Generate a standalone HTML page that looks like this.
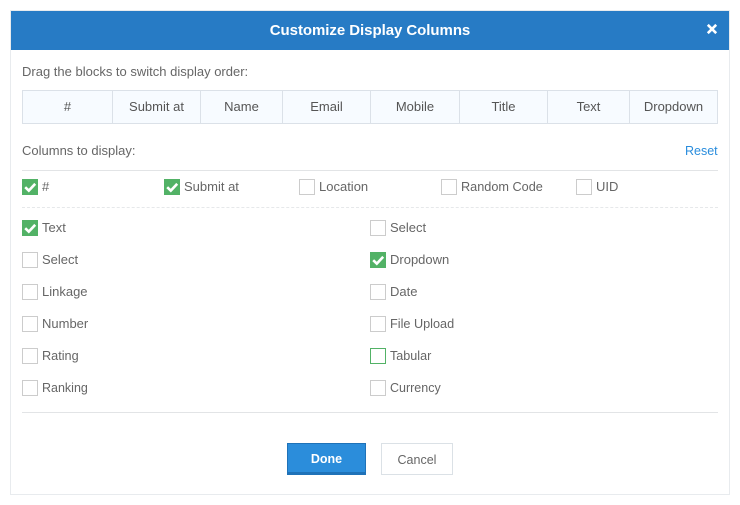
<!DOCTYPE html>
<html>
<head>
<meta charset="utf-8">
<style>
html,body{margin:0;padding:0;background:#fff;}
body{width:740px;height:505px;position:relative;overflow:hidden;font-family:"Liberation Sans",Arial,sans-serif;font-size:13px;color:#666;}
.a{position:absolute;white-space:nowrap;line-height:16px;}
.dialog{position:absolute;left:10px;top:10px;width:718px;height:483px;border:1px solid #e8ebee;}
.head{position:absolute;left:11px;top:11px;width:718px;height:39px;background:#277bc5;color:#fff;font-weight:bold;font-size:15px;letter-spacing:-0.05px;line-height:39px;text-align:center;}
.tbl{position:absolute;left:22px;top:90px;width:694px;height:32px;border:1px solid #dbe1e8;background:#f7fbff;}
.cell{position:absolute;top:0;height:32px;line-height:32px;text-align:center;color:#555;box-sizing:border-box;border-right:1px solid #dbe1e8;}
.cb{position:absolute;width:14px;height:14px;border:1px solid #ccc;background:#fff;}
.cb.on{width:16px;height:16px;border:0;background:#52b266;}
.cb.on svg{position:absolute;left:0;top:0;}
.cb.g{border-color:#52b266;}
.hr{position:absolute;left:22px;width:696px;height:1px;background:#e2e4e6;}
.dash{position:absolute;left:22px;width:696px;height:0;border-top:1px dashed #e6e8ea;}
.btn{position:absolute;box-sizing:border-box;text-align:center;}
</style>
</head>
<body>
<div class="dialog"></div>
<div class="head">Customize Display Columns</div>
<svg class="a" style="left:706px;top:23px" width="12" height="12" viewBox="0 0 12 12"><path d="M1.8 1.8L10.2 10.2M10.2 1.8L1.8 10.2" stroke="#fff" stroke-width="2.6" fill="none"/></svg>

<div class="a" style="left:22px;top:64px">Drag the blocks to switch display order:</div>

<div class="tbl">
<div class="cell" style="left:0;width:90px">#</div>
<div class="cell" style="left:90px;width:88px">Submit at</div>
<div class="cell" style="left:178px;width:82px">Name</div>
<div class="cell" style="left:260px;width:88px">Email</div>
<div class="cell" style="left:348px;width:89px">Mobile</div>
<div class="cell" style="left:437px;width:88px">Title</div>
<div class="cell" style="left:525px;width:82px">Text</div>
<div class="cell" style="left:607px;width:87px;border-right:0">Dropdown</div>
</div>

<div class="a" style="left:22px;top:143px">Columns to display:</div>
<div class="a" style="left:685px;top:143px;font-size:12.5px;color:#2a8ddd">Reset</div>
<div class="hr" style="top:170px"></div>

<div class="cb on" style="left:22px;top:179px"><svg width="16" height="16"><path d="M3.2 8.2L6.8 11.6L13.2 4.8" stroke="#fff" stroke-width="2.6" fill="none"/></svg></div>
<div class="a" style="left:42px;top:179px">#</div>
<div class="cb on" style="left:164px;top:179px"><svg width="16" height="16"><path d="M3.2 8.2L6.8 11.6L13.2 4.8" stroke="#fff" stroke-width="2.6" fill="none"/></svg></div>
<div class="a" style="left:184px;top:179px">Submit at</div>
<div class="cb" style="left:299px;top:179px"></div>
<div class="a" style="left:319px;top:179px">Location</div>
<div class="cb" style="left:441px;top:179px"></div>
<div class="a" style="left:461px;top:179px;font-size:12.7px">Random Code</div>
<div class="cb" style="left:576px;top:179px"></div>
<div class="a" style="left:596px;top:179px">UID</div>

<div class="dash" style="top:207px"></div>

<div class="cb on" style="left:22px;top:220px"><svg width="16" height="16"><path d="M3.2 8.2L6.8 11.6L13.2 4.8" stroke="#fff" stroke-width="2.6" fill="none"/></svg></div>
<div class="a" style="left:42px;top:220px">Text</div>
<div class="cb" style="left:22px;top:252px"></div>
<div class="a" style="left:42px;top:252px">Select</div>
<div class="cb" style="left:22px;top:284px"></div>
<div class="a" style="left:42px;top:284px">Linkage</div>
<div class="cb" style="left:22px;top:316px"></div>
<div class="a" style="left:42px;top:316px">Number</div>
<div class="cb" style="left:22px;top:348px"></div>
<div class="a" style="left:42px;top:348px;font-size:12.7px">Rating</div>
<div class="cb" style="left:22px;top:380px"></div>
<div class="a" style="left:42px;top:380px;font-size:12.5px">Ranking</div>

<div class="cb" style="left:370px;top:220px"></div>
<div class="a" style="left:390px;top:220px">Select</div>
<div class="cb on" style="left:370px;top:252px"><svg width="16" height="16"><path d="M3.2 8.2L6.8 11.6L13.2 4.8" stroke="#fff" stroke-width="2.6" fill="none"/></svg></div>
<div class="a" style="left:390px;top:252px">Dropdown</div>
<div class="cb" style="left:370px;top:284px"></div>
<div class="a" style="left:390px;top:284px">Date</div>
<div class="cb" style="left:370px;top:316px"></div>
<div class="a" style="left:390px;top:316px;font-size:12.7px">File Upload</div>
<div class="cb g" style="left:370px;top:348px"></div>
<div class="a" style="left:390px;top:348px;font-size:12.6px">Tabular</div>
<div class="cb" style="left:370px;top:380px"></div>
<div class="a" style="left:390px;top:380px;font-size:12.5px">Currency</div>

<div class="hr" style="top:412px"></div>

<div class="btn" style="left:287px;top:443px;width:79px;height:32px;background:#2b8ddb;border:1px solid #1f72b8;border-bottom:3px solid #1f72b8;color:#fff;font-weight:bold;font-size:12.5px;line-height:30px">Done</div>
<div class="btn" style="left:381px;top:443px;width:72px;height:32px;background:#fff;border:1px solid #dbe1e6;color:#666;font-size:12.5px;line-height:32px">Cancel</div>
</body>
</html>
